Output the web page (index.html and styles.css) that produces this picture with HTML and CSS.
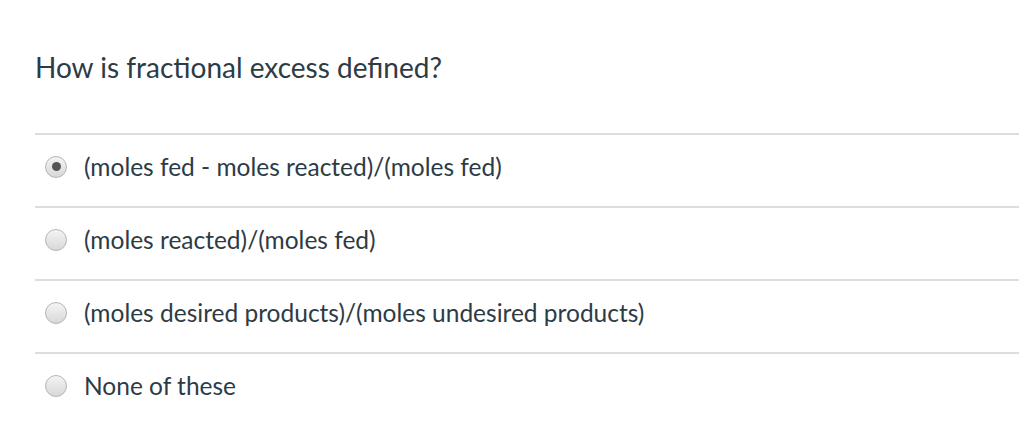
FILE: index.html
```html
<!DOCTYPE html>
<html>
<head>
<meta charset="utf-8">
<link rel="stylesheet" href="styles.css">
</head>
<body>
<div class="quiz">
  <h1 class="question">How is fractional excess defined?</h1>
  <ul class="answers">
    <li class="answer"><span class="radio checked"></span><span class="label">(moles fed - moles reacted)/(moles fed)</span></li>
    <li class="answer"><span class="radio"></span><span class="label">(moles reacted)/(moles fed)</span></li>
    <li class="answer"><span class="radio"></span><span class="label">(moles desired products)/(moles undesired products)</span></li>
    <li class="answer"><span class="radio"></span><span class="label">None of these</span></li>
  </ul>
</div>
</body>
</html>
```
FILE: styles.css
```css
html, body {
  margin: 0;
  padding: 0;
  background: #ffffff;
}
body {
  font-family: Lato, "Open Sans", sans-serif;
  color: #2d3b45;
}
.quiz {
  padding: 0 5px 0 35px;
}
.question {
  margin: 0;
  padding: 49px 0 48px;
  font-size: 28px;
  font-weight: 400;
  line-height: 36px;
}
.answers {
  list-style: none;
  margin: 0;
  padding: 0;
}
.answer {
  display: flex;
  align-items: center;
  gap: 17px;
  height: 63px;
  padding: 0 0 8px 10px;
  border-top: 2px solid #dddddd;
}
.radio {
  width: 20px;
  height: 20px;
  border-radius: 50%;
  border: 1px solid #b5b5b5;
  background: linear-gradient(#f4f4f4, #d8d8d8);
  display: flex;
  align-items: center;
  justify-content: center;
  flex: none;
}
.radio.checked::after {
  content: "";
  width: 9px;
  height: 9px;
  border-radius: 50%;
  background: #555555;
}
.label {
  font-size: 24.5px;
  line-height: 30px;
}
```
